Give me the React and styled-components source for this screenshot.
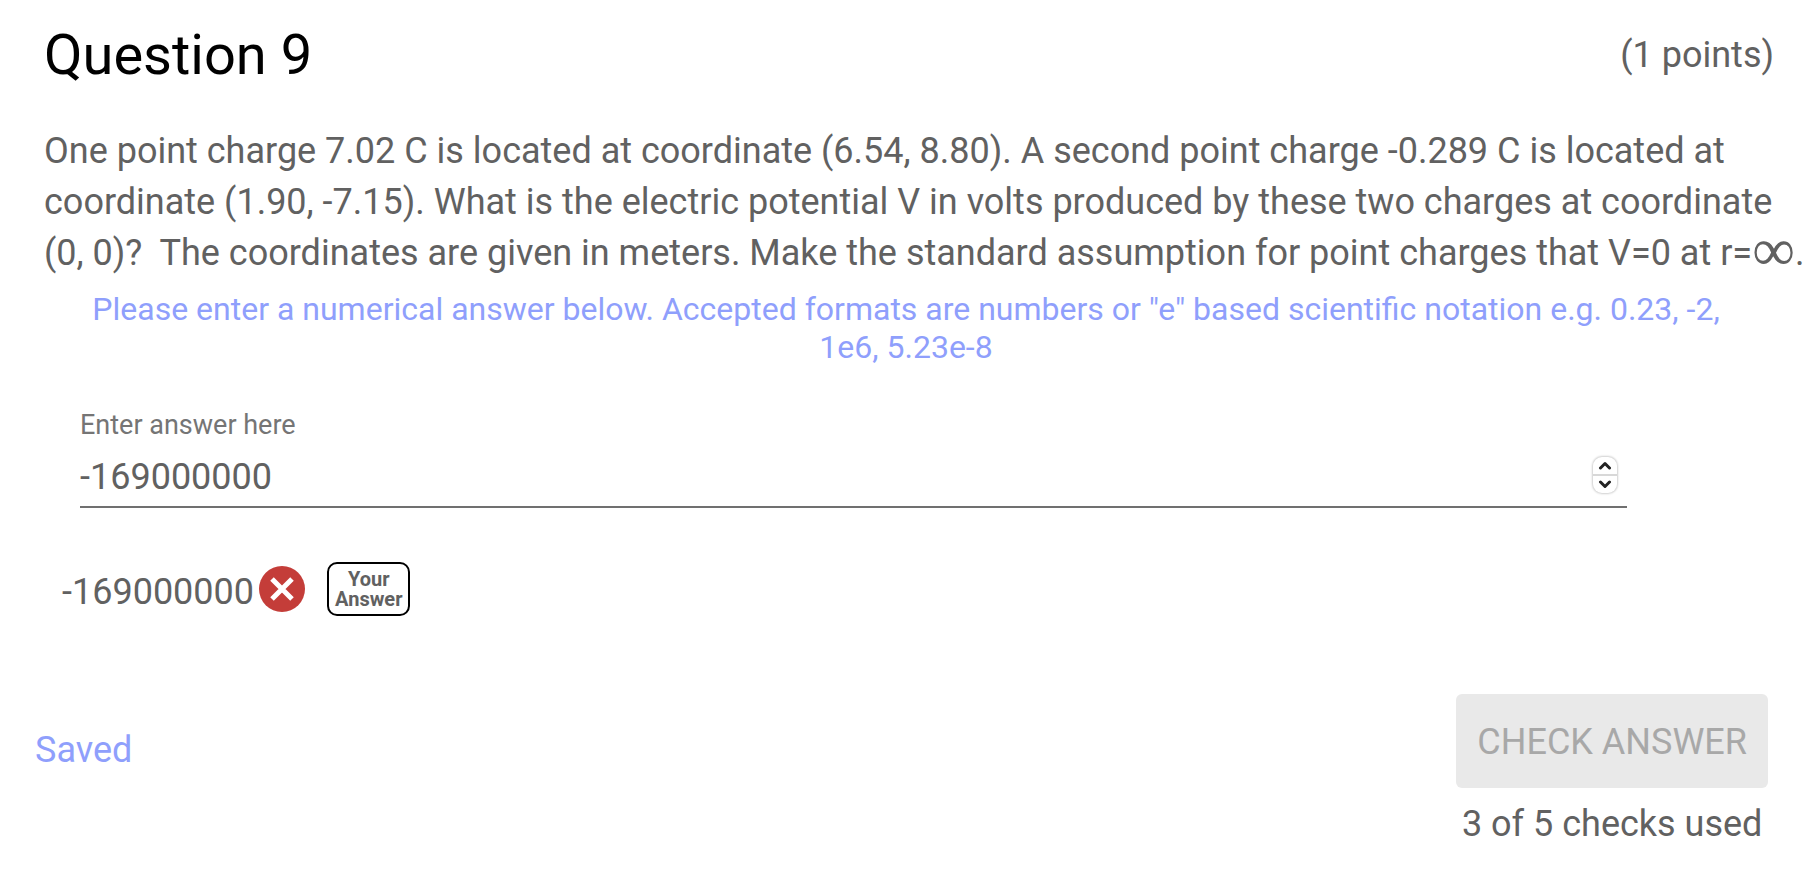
import React, { useState } from 'react'
import styled, { createGlobalStyle } from 'styled-components'

const GlobalStyle = createGlobalStyle`
    * {
        box-sizing: border-box;
    }

    body {
        margin: 0;
        background: #fff;
        color: #616161;
        font-family: Roboto, sans-serif;
        font-size: 36px;
        overflow-x: hidden;
    }
`

const Page = styled.main`
    padding: 23px 36px 0 44px;
`

const Header = styled.header`
    display: flex;
    justify-content: space-between;
    align-items: center;
    margin-right: -6px;
`

const Title = styled.h1`
    margin: 0;
    color: #000;
    font-size: 56px;
    font-weight: 400;
    line-height: 64px;
`

const Points = styled.span`
    line-height: 64px;
`

const Prompt = styled.p`
    margin: 39px -36px 0 0;
    line-height: 51px;
`

const Line = styled.span`
    display: block;
    white-space: pre;
`

const MathSymbol = styled.span`
    font-family: 'Liberation Serif', serif;
    font-size: 60px;
    line-height: 1px;
    vertical-align: -5px;
`

const Hint = styled.p`
    margin: 11px 0 0;
    padding: 0 48px;
    color: #8f9ffc;
    font-size: 32px;
    line-height: 38px;
    text-align: center;
`

const Field = styled.div`
    margin: 41px 141px 0 36px;
    border-bottom: 2px solid #707070;
`

const Label = styled.label`
    display: block;
    color: #757575;
    font-size: 27px;
    line-height: 36px;
`

const FieldRow = styled.div`
    display: flex;
    align-items: center;
    justify-content: space-between;
    height: 63px;
    padding-right: 10px;
`

const Input = styled.input`
    flex: 1;
    min-width: 0;
    padding: 4px 0 0;
    border: none;
    outline: none;
    background: none;
    color: #616161;
    font: inherit;
`

const Stepper = styled.div`
    display: flex;
    flex-direction: column;
    width: 24px;
    height: 36px;
    border-radius: 9px;
    box-shadow: 0 0 2px 1px #d0d0d0;
`

const Step = styled.button`
    display: flex;
    flex: 1;
    align-items: center;
    justify-content: center;
    padding: 0;
    border: none;
    background: none;
    color: #222;

    & + & {
        border-top: 2px solid #d8d8d8;
    }
`

const Result = styled.div`
    display: flex;
    align-items: center;
    margin: 54px 0 0 18px;
`

const Value = styled.span`
    padding-top: 5px;
`

const Wrong = styled.svg`
    width: 48px;
    height: 48px;
    margin: 0 21px 0 4px;
`

const Badge = styled.span`
    padding: 5px 6px;
    border: 2px solid #000;
    border-radius: 10px;
    font-size: 20px;
    font-weight: 700;
    line-height: 20px;
    text-align: center;
`

const Footer = styled.footer`
    display: flex;
    justify-content: space-between;
    align-items: flex-start;
    margin: 78px 0 0 -9px;
`

const Saved = styled.span`
    padding-top: 36px;
    color: #8f9ffc;
    line-height: 40px;
`

const Actions = styled.div`
    display: flex;
    flex-direction: column;
    align-items: center;
`

const CheckButton = styled.button`
    height: 94px;
    padding: 2px 21px 0;
    border: none;
    border-radius: 6px;
    background: #e9e9e9;
    color: #a8a8a8;
    font: inherit;
`

const Checks = styled.span`
    margin-top: 16px;
    line-height: 40px;
`

const Chevron = ({ path }) => (
    <svg width="14" height="9" viewBox="0 0 14 9" fill="none" stroke="currentColor" strokeWidth="3" strokeLinecap="round" strokeLinejoin="round">
        <path d={path} />
    </svg>
)

const App = () => {
    const [answer, setAnswer] = useState('-169000000')

    const step = (amount) => setAnswer(String(Number(answer) + amount))

    return (
        <>
            <GlobalStyle />
            <Page>
                <Header>
                    <Title>Question 9</Title>
                    <Points>(1 points)</Points>
                </Header>
                <Prompt>
                    <Line>One point charge 7.02 C is located at coordinate (6.54, 8.80). A second point charge -0.289 C is located at</Line>
                    <Line>coordinate (1.90, -7.15). What is the electric potential V in volts produced by these two charges at coordinate</Line>
                    <Line>(0, 0)?  The coordinates are given in meters. Make the standard assumption for point charges that V=0 at r=<MathSymbol>∞</MathSymbol>.</Line>
                </Prompt>
                <Hint>
                    Please enter a numerical answer below. Accepted formats are numbers or "e" based scientific notation e.g. 0.23, -2, 1e6, 5.23e-8
                </Hint>
                <Field>
                    <Label htmlFor="answer">Enter answer here</Label>
                    <FieldRow>
                        <Input id="answer" type="text" inputMode="decimal" value={answer} onChange={(e) => setAnswer(e.target.value)} />
                        <Stepper>
                            <Step type="button" aria-label="Increase" onClick={() => step(1)}>
                                <Chevron path="M2.5 7L7 2.5L11.5 7" />
                            </Step>
                            <Step type="button" aria-label="Decrease" onClick={() => step(-1)}>
                                <Chevron path="M2.5 2L7 6.5L11.5 2" />
                            </Step>
                        </Stepper>
                    </FieldRow>
                </Field>
                <Result>
                    <Value>-169000000</Value>
                    <Wrong viewBox="0 0 48 48" role="img" aria-label="Incorrect">
                        <circle cx="24" cy="24" r="23" fill="#c43d39" />
                        <path d="M14 14l20 20M34 14L14 34" stroke="#fff" strokeWidth="5" />
                    </Wrong>
                    <Badge>Your<br />Answer</Badge>
                </Result>
                <Footer>
                    <Saved>Saved</Saved>
                    <Actions>
                        <CheckButton type="button" disabled>CHECK ANSWER</CheckButton>
                        <Checks>3 of 5 checks used</Checks>
                    </Actions>
                </Footer>
            </Page>
        </>
    )
}

export default App
